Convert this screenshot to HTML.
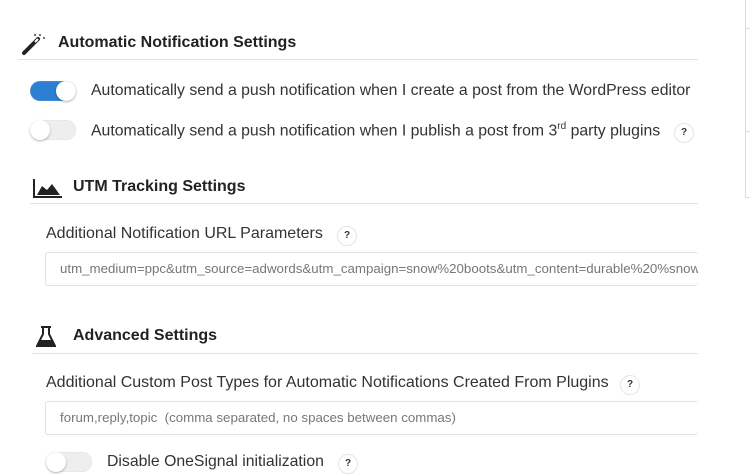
<!DOCTYPE html>
<html><head><style>
body{margin:0;width:750px;height:461px;overflow:hidden;background:#fff;font-family:"Liberation Sans",sans-serif;color:#333;position:relative}
.a{position:absolute;white-space:nowrap}
.h{font-size:16px;font-weight:bold;color:#222}
.line{position:absolute;height:1px;background:#e3e3e3}
.t{font-size:15.8px;color:#333}
.tog{position:absolute;width:46px;height:20px;border-radius:10px;background:#eee;box-shadow:inset 0 0 1px #ccc}
.tog .k{position:absolute;top:0;width:20px;height:20px;border-radius:50%;background:#fff;box-shadow:0 1px 2px rgba(0,0,0,.3)}
.q{position:absolute;width:20px;height:20px;border-radius:50%;border:1px solid #e5e5e5;font-size:10px;font-weight:bold;text-align:center;line-height:18px;color:#333;box-sizing:border-box}
.inp{position:absolute;left:45px;width:653px;height:34px;border:1px solid #e2e2e2;border-right:none;border-radius:3px;box-sizing:border-box;font-size:13.3px;color:#777;padding-left:14px;line-height:32px;white-space:nowrap;overflow:hidden}
</style></head><body>
<div style="position:absolute;left:745px;top:0;width:6px;height:197px;border-left:1px solid #ddd;border-bottom:1px solid #ddd"></div>
<div style="position:absolute;left:745px;top:28px;width:6px;height:1px;background:#ddd"></div>
<div style="position:absolute;left:745px;top:131px;width:6px;height:1px;background:#ddd"></div>

<svg class="a" style="left:20px;top:32px" width="28" height="24" viewBox="0 0 28 24"><path d="M4 21 L18 7" stroke="#222" stroke-width="4" stroke-linecap="round"/><path d="M15 10 L18 7" stroke="#fff" stroke-width="2"/><circle cx="20" cy="3" r="1" fill="#444"/><circle cx="24" cy="6" r="1" fill="#444"/><circle cx="15" cy="3" r="1" fill="#444"/></svg>
<div class="a h" style="left:58px;top:34px">Automatic Notification Settings</div>
<div class="line" style="left:18px;top:59px;width:680px"></div>

<div class="tog" style="left:30px;top:81px;background:#2d7fd3"><div class="k" style="left:26px"></div></div>
<div class="a t" style="left:91px;top:82px">Automatically send a push notification when I create a post from the WordPress editor</div>
<div class="tog" style="left:30px;top:120px"><div class="k" style="left:0"></div></div>
<div class="a t" style="left:91px;top:121px">Automatically send a push notification when I publish a post from 3<sup style="font-size:10px">rd</sup> party plugins</div>
<div class="q" style="left:674px;top:123px">?</div>

<svg class="a" style="left:33px;top:178px" width="30" height="20" viewBox="0 0 30 20"><path d="M1 1 V19 H29" stroke="#222" stroke-width="2" fill="none"/><path d="M4 17 L9 8 L14 12 L19 6 L27 17 Z" fill="#222"/></svg>
<div class="a h" style="left:73px;top:178px">UTM Tracking Settings</div>
<div class="line" style="left:30px;top:203px;width:668px"></div>
<div class="a t" style="left:46px;top:225px;font-size:16px">Additional Notification URL Parameters</div>
<div class="q" style="left:337px;top:226px">?</div>
<div class="inp" style="top:252px">utm_medium=ppc&amp;utm_source=adwords&amp;utm_campaign=snow%20boots&amp;utm_content=durable%20%snow</div>

<svg class="a" style="left:36px;top:326px" width="20" height="22" viewBox="0 0 20 22"><path d="M5 1 H15 M7 1 V8 L1 20 H19 L13 8 V1" stroke="#222" stroke-width="2" fill="none"/><path d="M4 14 H16 L19 20 H1 Z" fill="#222"/></svg>
<div class="a h" style="left:73px;top:327px">Advanced Settings</div>
<div class="line" style="left:32px;top:353px;width:666px"></div>
<div class="a t" style="left:46px;top:374px;font-size:16px">Additional Custom Post Types for Automatic Notifications Created From Plugins</div>
<div class="q" style="left:620px;top:375px">?</div>
<div class="inp" style="top:401px">forum,reply,topic&nbsp; (comma separated, no spaces between commas)</div>
<div class="tog" style="left:46px;top:452px"><div class="k" style="left:0"></div></div>
<div class="a t" style="left:107px;top:453px">Disable OneSignal initialization</div>
<div class="q" style="left:338px;top:454px">?</div>
</body></html>
